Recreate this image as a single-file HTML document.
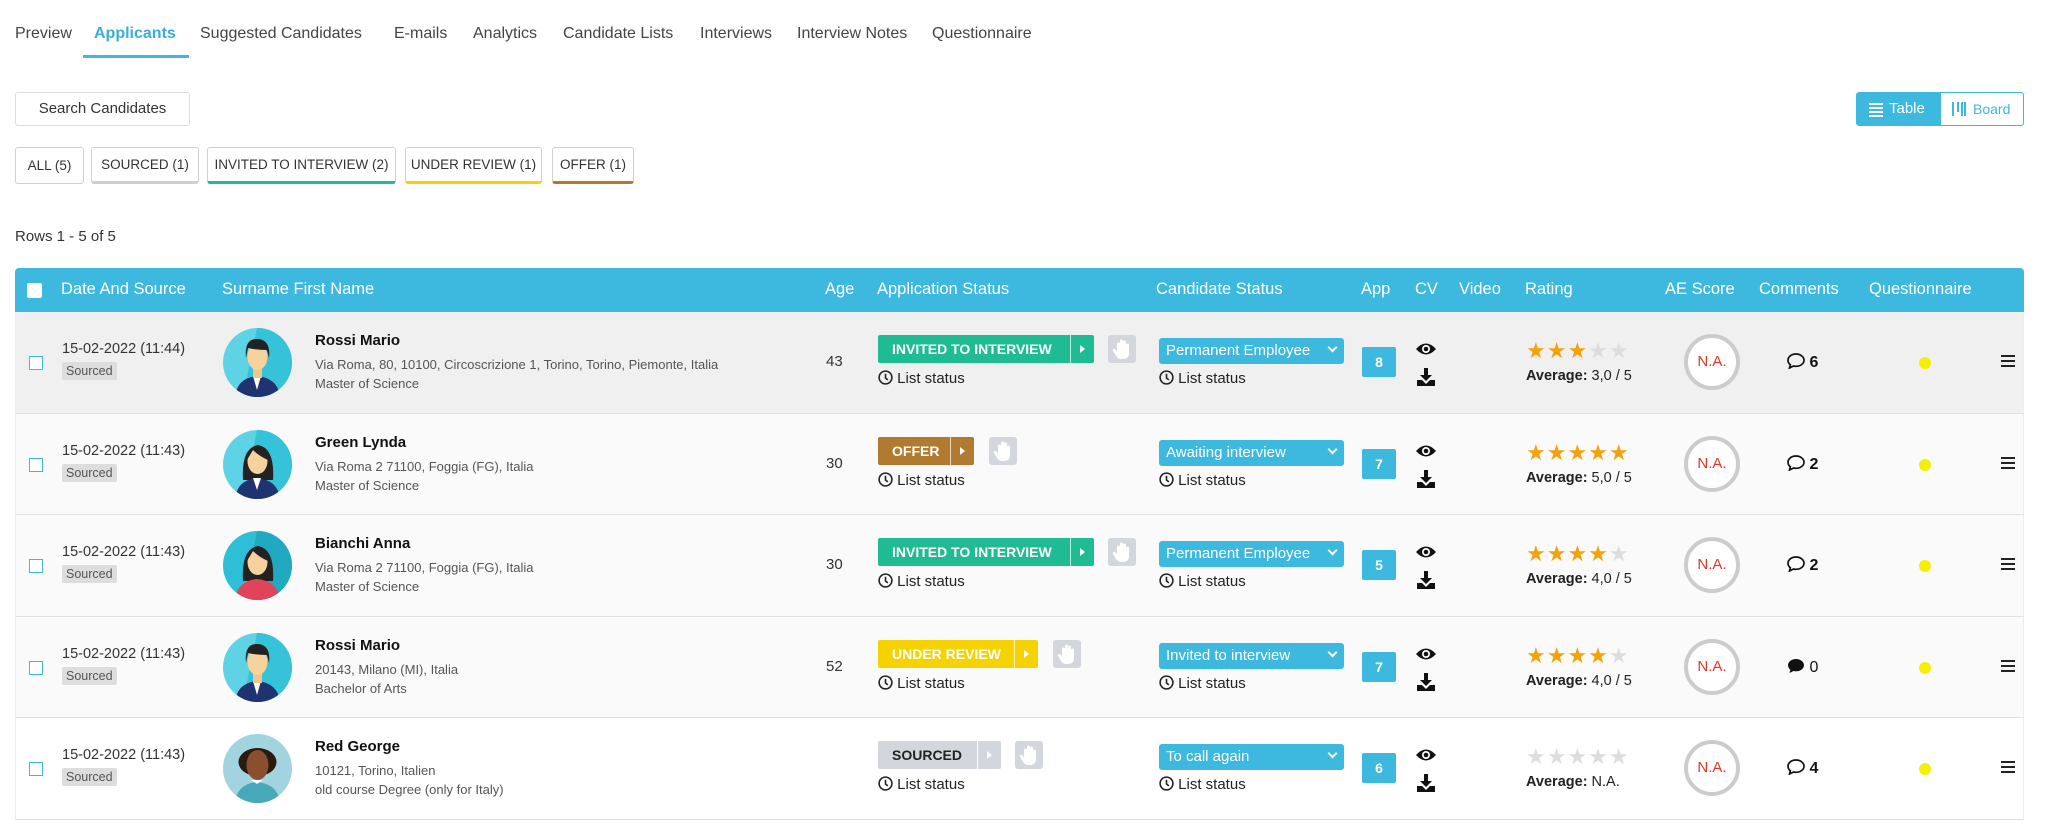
<!DOCTYPE html>
<html><head><meta charset="utf-8"><style>
*{box-sizing:border-box;margin:0;padding:0}
body{width:2048px;height:837px;background:#fff;font-family:"Liberation Sans",sans-serif;color:#333;position:relative;overflow:hidden}
.a{position:absolute;white-space:nowrap}
.tab{font-size:16px;color:#444;top:25px}
.chip{position:absolute;top:147px;height:37px;border:1px solid #d0d0d0;border-radius:3px;font-size:13.5px;color:#333;display:flex;align-items:center;justify-content:center;text-transform:uppercase}
.hd{position:absolute;left:15px;top:268px;width:2009px;height:44px;background:#3db8de;border-radius:4px 4px 0 0}
.hd span{position:absolute;top:12px;color:#fff;font-size:16.5px}
.row{position:absolute;left:15px;width:2009px;height:102px;border-bottom:1px solid #e2e2e2;border-left:1px solid #eee;border-right:1px solid #eee}
.cb{left:13px;top:44px;width:14px;height:14px;border:1.5px solid #3db8de;background:#fff}
.date{left:46px;top:29px;font-size:14.5px;color:#333}
.src{left:46px;top:50px;font-size:12.5px;color:#555;background:#ddd;padding:2px 4px;border-radius:2px}
.av{left:207px;top:16px;width:69px;height:69px;border-radius:50%;overflow:hidden}
.nm{left:299px;top:20px;font-size:15px;font-weight:bold;color:#111}
.ad{left:299px;top:45px;font-size:13px;color:#555}
.dg{left:299px;top:64px;font-size:13px;color:#555}
.age{left:810px;top:41px;font-size:15px}
.st{left:862px;top:23px;height:28px;color:#fff;font-weight:bold;font-size:14px;line-height:28px;border-radius:2px;padding-left:14px}
.st i{position:absolute;right:0;top:0;width:24px;height:28px;border-left:1px solid rgba(255,255,255,.7)}
.st i:after{content:"";position:absolute;left:9px;top:10px;border-left:5px solid #fff;border-top:4px solid transparent;border-bottom:4px solid transparent}
.hand{top:23px;width:28px;height:28px;background:#d3d6dc;border-radius:3px}
.ls{top:58px;font-size:15px;color:#222}
.sel{left:1143px;top:26px;width:185px;height:26px;background:#3db8de;border-radius:3px;color:#fff;font-size:15px;line-height:26px;padding-left:7px;overflow:hidden}
.sel b{position:absolute;right:8px;top:6px;width:7px;height:7px;border-right:2px solid #fff;border-bottom:2px solid #fff;transform:rotate(45deg)}
.app{left:1346px;top:35px;width:34px;height:30px;background:#3db8de;color:#fff;font-weight:bold;font-size:14px;text-align:center;line-height:30px;border-radius:2px}
.stars{left:1510px;top:26px;font-size:22px;letter-spacing:1px;color:#f5a20a}
.avg{left:1510px;top:56px;font-size:14.5px;color:#222}
.ae{left:1668px;top:22px;width:56px;height:56px;border:4px solid #ccc;border-radius:50%;color:#e03a2a;font-size:15px;text-align:center;line-height:48px;background:#fff}
.cm{left:1771px;top:41px;font-size:16px;color:#111}
.dot{left:1903px;top:45px;width:12px;height:12px;background:#f6ef00;border-radius:50%}
.hb{left:1985px;top:43px;width:14px}
.hb i{display:block;height:2px;background:#222;margin-bottom:3px}
</style></head><body>
<div class="a tab" style="left:15px">Preview</div>
<div class="a tab" style="left:94px;color:#3aaed8;font-weight:bold">Applicants</div>
<div class="a" style="left:83px;top:55px;width:106px;height:3px;background:#3db8de"></div>
<div class="a tab" style="left:200px">Suggested Candidates</div>
<div class="a tab" style="left:394px">E-mails</div>
<div class="a tab" style="left:473px">Analytics</div>
<div class="a tab" style="left:563px">Candidate Lists</div>
<div class="a tab" style="left:700px">Interviews</div>
<div class="a tab" style="left:797px">Interview Notes</div>
<div class="a tab" style="left:932px">Questionnaire</div>

<div class="a" style="left:15px;top:92px;width:175px;height:34px;border:1px solid #ddd;border-radius:3px;font-size:15px;color:#333;line-height:32px;text-align:center">Search Candidates</div>

<div class="a" style="left:1856px;top:92px;width:168px;height:34px;border:1px solid #3db8de;border-radius:3px;overflow:hidden">
<div style="position:absolute;left:0;top:0;width:84px;height:34px;background:#3db8de;color:#fff;font-size:15px;line-height:32px;padding-left:32px">Table</div>
<div style="position:absolute;left:12px;top:10px;width:14px"><i style="display:block;height:2px;background:#fff;margin-bottom:2px"></i><i style="display:block;height:2px;background:#fff;margin-bottom:2px"></i><i style="display:block;height:2px;background:#fff;margin-bottom:2px"></i><i style="display:block;height:2px;background:#fff"></i></div>
<div style="position:absolute;left:95px;top:9px;width:14px;height:14px;border-left:2px solid #3db8de;border-right:2px solid #3db8de"><i style="position:absolute;left:3px;top:0;width:2px;height:10px;background:#3db8de"></i><i style="position:absolute;left:7px;top:0;width:2px;height:14px;background:#3db8de"></i></div>
<div style="position:absolute;left:116px;top:0;color:#3db8de;font-size:14px;line-height:32px">Board</div>
</div>

<div class="chip" style="left:15px;width:69px">All (5)</div>
<div class="chip" style="left:91px;width:108px;border-bottom:3px solid #ccd0d6">Sourced (1)</div>
<div class="chip" style="left:207px;width:189px;border-bottom:3px solid #1fbc94">Invited to interview (2)</div>
<div class="chip" style="left:405px;width:137px;border-bottom:3px solid #f6d300">Under review (1)</div>
<div class="chip" style="left:552px;width:82px;border-bottom:3px solid #b07a30">Offer (1)</div>

<div class="a" style="left:15px;top:228px;font-size:15px;color:#333">Rows 1 - 5 of 5</div>

<div class="hd">
<div style="position:absolute;left:12px;top:15px;width:15px;height:15px;background:#fff;border-radius:2px"></div>
<span style="left:46px">Date And Source</span>
<span style="left:207px">Surname First Name</span>
<span style="left:810px">Age</span>
<span style="left:862px">Application Status</span>
<span style="left:1141px">Candidate Status</span>
<span style="left:1346px">App</span>
<span style="left:1400px">CV</span>
<span style="left:1444px">Video</span>
<span style="left:1510px">Rating</span>
<span style="left:1650px">AE Score</span>
<span style="left:1744px">Comments</span>
<span style="left:1854px">Questionnaire</span>
</div>

<svg width="0" height="0" style="position:absolute"><defs>
<symbol id="m" viewBox="0 0 69 69"><rect width="69" height="69" fill="#5fd3e6"/><path d="M34 0 L69 0 69 69 20 69Z" fill="#36c2d8"/><path d="M12 69 Q14 50 34 48 Q55 50 57 69Z" fill="#1f3370"/><path d="M30 48 L34 62 38 48Z" fill="#fff"/><rect x="30" y="38" width="9" height="12" fill="#f2c58a"/><ellipse cx="34.5" cy="29" rx="10" ry="13" fill="#f6d39c"/><path d="M23 30 Q21 10 35 11 Q48 12 46 30 L44 22 Q34 22 25 20Z" fill="#222"/></symbol>
<symbol id="f" viewBox="0 0 69 69"><rect width="69" height="69" fill="#5fd3e6"/><path d="M34 0 L69 0 69 69 20 69Z" fill="#36c2d8"/><path d="M20 50 Q18 18 35 15 Q52 18 50 50Z" fill="#222"/><path d="M12 69 Q14 50 34 48 Q55 50 57 69Z" fill="#1f3370"/><path d="M30 48 L34 60 38 48Z" fill="#fff"/><ellipse cx="34.5" cy="31" rx="10" ry="13" fill="#f6d39c"/><path d="M24 30 Q24 17 36 17 Q44 19 45 30 Q36 26 30 20Z" fill="#222"/></symbol>
<symbol id="f2" viewBox="0 0 69 69"><rect width="69" height="69" fill="#2ebfd6"/><path d="M34 0 L69 0 69 69 20 69Z" fill="#21a9c2"/><path d="M20 50 Q18 18 35 15 Q52 18 50 50Z" fill="#222"/><path d="M12 69 Q14 50 34 48 Q55 50 57 69Z" fill="#e0445a"/><ellipse cx="34.5" cy="31" rx="10" ry="13" fill="#f6d39c"/><path d="M24 30 Q24 17 36 17 Q44 19 45 30 Q36 26 30 20Z" fill="#222"/></symbol>
<symbol id="g" viewBox="0 0 69 69"><rect width="69" height="69" fill="#a2d4df"/><path d="M12 69 Q14 50 34 48 Q55 50 57 69Z" fill="#46a8b8"/><path d="M28 46 L34 50 40 46Z" fill="#fff"/><ellipse cx="34.5" cy="28" rx="19" ry="14" fill="#2a1a10"/><ellipse cx="34.5" cy="31" rx="11" ry="15" fill="#8a4f2e"/></symbol>
<symbol id="eye" viewBox="0 0 20 14"><path d="M0 7 Q10 -4 20 7 Q10 18 0 7Z" fill="#111"/><circle cx="10" cy="7" r="4" fill="#fff"/><circle cx="10" cy="7" r="2.3" fill="#111"/></symbol>
<symbol id="dl" viewBox="0 0 18 18"><path d="M7 0h4v7h4l-6 6-6-6h4z" fill="#111"/><path d="M0 12h5l4 4 4-4h5v6H0z" fill="#111"/></symbol>
<symbol id="clk" viewBox="0 0 16 16"><circle cx="8" cy="8" r="6.8" fill="none" stroke="#222" stroke-width="1.7"/><path d="M8 4v4.5l2.5 2" fill="none" stroke="#222" stroke-width="1.7"/></symbol>
<symbol id="hand" viewBox="0 0 28 28"><path d="M9 16V9a1.5 1.5 0 013 0v5V6a1.5 1.5 0 013 0v8V7a1.5 1.5 0 013 0v8v-5a1.5 1.5 0 013 0v8q0 6-6 6h-2q-3 0-5-3l-3-5a1.4 1.4 0 012.5-1.4z" fill="#fff"/></symbol>
<symbol id="bub" viewBox="0 0 18 16"><path d="M9 1C4.5 1 1 3.8 1 7.3c0 1.8.9 3.4 2.4 4.5L2.5 15l4-2c.8.2 1.6.3 2.5.3 4.5 0 8-2.8 8-6.1S13.5 1 9 1z" fill="none" stroke="#111" stroke-width="1.7"/></symbol>
<symbol id="bubf" viewBox="0 0 18 16"><path d="M9 1C4.5 1 1 3.8 1 7.3c0 1.8.9 3.4 2.4 4.5L2.5 15l4-2c.8.2 1.6.3 2.5.3 4.5 0 8-2.8 8-6.1S13.5 1 9 1z" fill="#111"/></symbol>
</defs></svg>

<!-- ROW 1 -->
<div class="row" style="top:312px;background:#f0f0f0">
<div class="a cb"></div><div class="a date">15-02-2022 (11:44)</div><div class="a src">Sourced</div>
<svg class="a av"><use href="#m"/></svg>
<div class="a nm">Rossi Mario</div><div class="a ad">Via Roma, 80, 10100, Circoscrizione 1, Torino, Torino, Piemonte, Italia</div><div class="a dg">Master of Science</div>
<div class="a age">43</div>
<div class="a st" style="width:216px;background:#1fbc94">INVITED TO INTERVIEW<i></i></div>
<svg class="a hand" style="left:1092px"><use href="#hand"/></svg>
<div class="a ls" style="left:862px"><svg width="15" height="15" style="vertical-align:-2px"><use href="#clk"/></svg> List status</div>
<div class="a sel">Permanent Employee<b></b></div>
<div class="a ls" style="left:1143px"><svg width="15" height="15" style="vertical-align:-2px"><use href="#clk"/></svg> List status</div>
<div class="a app">8</div>
<svg class="a" style="left:1400px;top:30px" width="20" height="14"><use href="#eye"/></svg>
<svg class="a" style="left:1401px;top:56px" width="18" height="18"><use href="#dl"/></svg>
<div class="a stars">★★★<span style="color:#ddd">★★</span></div>
<div class="a avg"><b>Average:</b> 3,0 / 5</div>
<div class="a ae">N.A.</div>
<div class="a cm"><svg width="18" height="16" style="vertical-align:-2px"><use href="#bub"/></svg> <b>6</b></div>
<div class="a dot"></div><div class="a hb"><i></i><i></i><i></i></div>
</div>

<!-- ROW 2 -->
<div class="row" style="top:414px;height:101px;background:#fafafa">
<div class="a cb"></div><div class="a date">15-02-2022 (11:43)</div><div class="a src">Sourced</div>
<svg class="a av"><use href="#f"/></svg>
<div class="a nm">Green Lynda</div><div class="a ad">Via Roma 2 71100, Foggia (FG), Italia</div><div class="a dg">Master of Science</div>
<div class="a age">30</div>
<div class="a st" style="width:96px;background:#b07a30">OFFER<i></i></div>
<svg class="a hand" style="left:973px"><use href="#hand"/></svg>
<div class="a ls" style="left:862px"><svg width="15" height="15" style="vertical-align:-2px"><use href="#clk"/></svg> List status</div>
<div class="a sel">Awaiting interview<b></b></div>
<div class="a ls" style="left:1143px"><svg width="15" height="15" style="vertical-align:-2px"><use href="#clk"/></svg> List status</div>
<div class="a app">7</div>
<svg class="a" style="left:1400px;top:30px" width="20" height="14"><use href="#eye"/></svg>
<svg class="a" style="left:1401px;top:56px" width="18" height="18"><use href="#dl"/></svg>
<div class="a stars">★★★★★</div>
<div class="a avg"><b>Average:</b> 5,0 / 5</div>
<div class="a ae">N.A.</div>
<div class="a cm"><svg width="18" height="16" style="vertical-align:-2px"><use href="#bub"/></svg> <b>2</b></div>
<div class="a dot"></div><div class="a hb"><i></i><i></i><i></i></div>
</div>

<!-- ROW 3 -->
<div class="row" style="top:515px;background:#fafafa">
<div class="a cb"></div><div class="a date">15-02-2022 (11:43)</div><div class="a src">Sourced</div>
<svg class="a av"><use href="#f2"/></svg>
<div class="a nm">Bianchi Anna</div><div class="a ad">Via Roma 2 71100, Foggia (FG), Italia</div><div class="a dg">Master of Science</div>
<div class="a age">30</div>
<div class="a st" style="width:216px;background:#1fbc94">INVITED TO INTERVIEW<i></i></div>
<svg class="a hand" style="left:1092px"><use href="#hand"/></svg>
<div class="a ls" style="left:862px"><svg width="15" height="15" style="vertical-align:-2px"><use href="#clk"/></svg> List status</div>
<div class="a sel">Permanent Employee<b></b></div>
<div class="a ls" style="left:1143px"><svg width="15" height="15" style="vertical-align:-2px"><use href="#clk"/></svg> List status</div>
<div class="a app">5</div>
<svg class="a" style="left:1400px;top:30px" width="20" height="14"><use href="#eye"/></svg>
<svg class="a" style="left:1401px;top:56px" width="18" height="18"><use href="#dl"/></svg>
<div class="a stars">★★★★<span style="color:#ddd">★</span></div>
<div class="a avg"><b>Average:</b> 4,0 / 5</div>
<div class="a ae">N.A.</div>
<div class="a cm"><svg width="18" height="16" style="vertical-align:-2px"><use href="#bub"/></svg> <b>2</b></div>
<div class="a dot"></div><div class="a hb"><i></i><i></i><i></i></div>
</div>

<!-- ROW 4 -->
<div class="row" style="top:617px;height:101px;background:#fafafa">
<div class="a cb"></div><div class="a date">15-02-2022 (11:43)</div><div class="a src">Sourced</div>
<svg class="a av"><use href="#m"/></svg>
<div class="a nm">Rossi Mario</div><div class="a ad">20143, Milano (MI), Italia</div><div class="a dg">Bachelor of Arts</div>
<div class="a age">52</div>
<div class="a st" style="width:160px;background:#f6d300">UNDER REVIEW<i></i></div>
<svg class="a hand" style="left:1037px"><use href="#hand"/></svg>
<div class="a ls" style="left:862px"><svg width="15" height="15" style="vertical-align:-2px"><use href="#clk"/></svg> List status</div>
<div class="a sel">Invited to interview<b></b></div>
<div class="a ls" style="left:1143px"><svg width="15" height="15" style="vertical-align:-2px"><use href="#clk"/></svg> List status</div>
<div class="a app">7</div>
<svg class="a" style="left:1400px;top:30px" width="20" height="14"><use href="#eye"/></svg>
<svg class="a" style="left:1401px;top:56px" width="18" height="18"><use href="#dl"/></svg>
<div class="a stars">★★★★<span style="color:#ddd">★</span></div>
<div class="a avg"><b>Average:</b> 4,0 / 5</div>
<div class="a ae">N.A.</div>
<div class="a cm"><svg width="18" height="16" style="vertical-align:-2px"><use href="#bubf"/></svg> 0</div>
<div class="a dot"></div><div class="a hb"><i></i><i></i><i></i></div>
</div>

<!-- ROW 5 -->
<div class="row" style="top:718px;background:#fff;border-bottom:1px solid #ddd">
<div class="a cb"></div><div class="a date">15-02-2022 (11:43)</div><div class="a src">Sourced</div>
<svg class="a av"><use href="#g"/></svg>
<div class="a nm">Red George</div><div class="a ad">10121, Torino, Italien</div><div class="a dg">old course Degree (only for Italy)</div>
<div class="a st" style="width:123px;background:#d3d6dc;color:#222">SOURCED<i style="border-left-color:#fff"></i></div>
<svg class="a hand" style="left:999px"><use href="#hand"/></svg>
<div class="a ls" style="left:862px"><svg width="15" height="15" style="vertical-align:-2px"><use href="#clk"/></svg> List status</div>
<div class="a sel">To call again<b></b></div>
<div class="a ls" style="left:1143px"><svg width="15" height="15" style="vertical-align:-2px"><use href="#clk"/></svg> List status</div>
<div class="a app">6</div>
<svg class="a" style="left:1400px;top:30px" width="20" height="14"><use href="#eye"/></svg>
<svg class="a" style="left:1401px;top:56px" width="18" height="18"><use href="#dl"/></svg>
<div class="a stars" style="color:#ddd">★★★★★</div>
<div class="a avg"><b>Average:</b> N.A.</div>
<div class="a ae">N.A.</div>
<div class="a cm"><svg width="18" height="16" style="vertical-align:-2px"><use href="#bub"/></svg> <b>4</b></div>
<div class="a dot"></div><div class="a hb"><i></i><i></i><i></i></div>
</div>
</body></html>
